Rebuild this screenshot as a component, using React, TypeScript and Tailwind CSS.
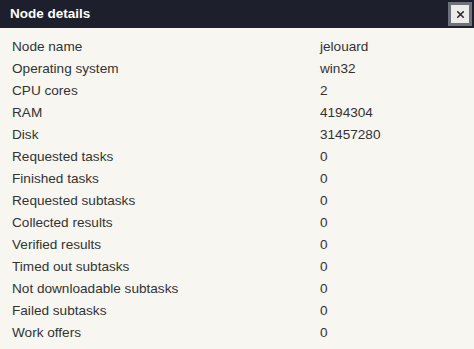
import { X } from 'lucide-react';

const rows: Array<[string, string]> = [
  ['Node name', 'jelouard'],
  ['Operating system', 'win32'],
  ['CPU cores', '2'],
  ['RAM', '4194304'],
  ['Disk', '31457280'],
  ['Requested tasks', '0'],
  ['Finished tasks', '0'],
  ['Requested subtasks', '0'],
  ['Collected results', '0'],
  ['Verified results', '0'],
  ['Timed out subtasks', '0'],
  ['Not downloadable subtasks', '0'],
  ['Failed subtasks', '0'],
  ['Work offers', '0'],
];

export default function App() {
  return (
    <div className="w-[474px] h-[349px] bg-[#f7f6f1] font-['Liberation_Sans',Arial,sans-serif] overflow-hidden">
      {/* Title bar */}
      <div className="h-[28px] bg-[#1d202c] flex items-center justify-between pl-[10px] pr-[2px]">
        <span className="text-white font-bold text-[13.5px]">Node details</span>
        <button className="w-[24px] h-[24px] border-[3px] border-[#6f717a] bg-[#ecebea] flex items-center justify-center">
          <X size={11} strokeWidth={3.5} className="text-[#2a2a2a]" />
        </button>
      </div>

      {/* Details */}
      <div className="pt-[8px] pl-[12px]">
        {rows.map(([label, value]) => (
          <div key={label} className="flex h-[22px] items-center text-[13.6px] text-[#333333]">
            <span className="w-[308px]">{label}</span>
            <span>{value}</span>
          </div>
        ))}
      </div>
    </div>
  );
}
